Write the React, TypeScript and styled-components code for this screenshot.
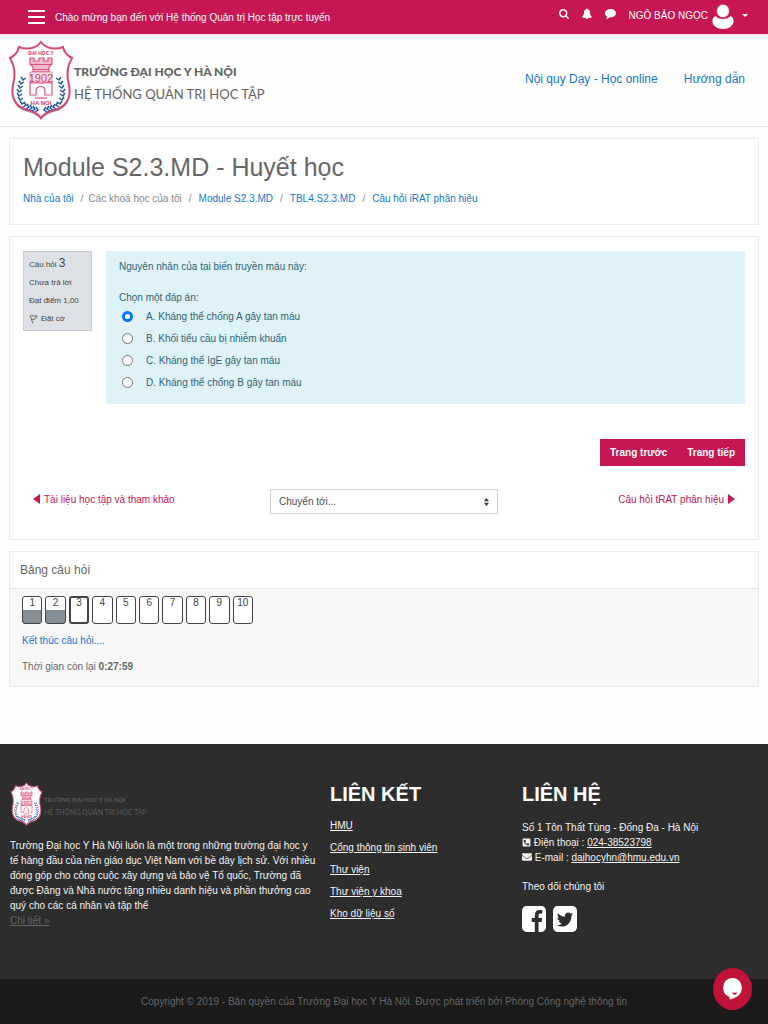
import React from "react";
import styled, { createGlobalStyle } from "styled-components";
import { FaEnvelope, FaPhoneSquareAlt } from "react-icons/fa";

const crimson = "#c61653";
const blue = "#1177d1";

const GlobalStyle = createGlobalStyle`
  *, *::before, *::after { box-sizing: border-box; }
  body {
    margin: 0;
    background: #fefefe;
    color: #666;
    font-family: "Liberation Sans", Arial, sans-serif;
    font-size: 10px;
    line-height: 15px;
  }
  a { color: ${blue}; text-decoration: none; }
  button, select, input { font: inherit; }
  h1, h2, h3, p, ul, ol, fieldset { margin: 0; padding: 0; border: 0; }
  ul, ol { list-style: none; }
`;

const Page = styled.div`
  display: flex;
  flex-direction: column;
  min-height: 100vh;
`;

const TopBar = styled.header`
  display: flex;
  align-items: center;
  height: 34px;
  padding: 0 20px 0 28px;
  background: ${crimson};
  color: #fff;
  box-shadow: 0 1px 4px rgba(0, 0, 0, 0.15);
`;

const IconButton = styled.button`
  display: inline-flex;
  padding: 0;
  border: 0;
  background: none;
  color: inherit;
`;

const Welcome = styled.span`
  flex: 1;
  margin-left: 10px;
`;

const TopActions = styled.div`
  display: flex;
  align-items: center;
  gap: 13px;
  padding-bottom: 6px;
`;

const UserMenu = styled.button`
  display: flex;
  align-items: center;
  gap: 4px;
  height: 26px;
  margin-bottom: -6px;
  padding: 0;
  border: 0;
  background: none;
  color: inherit;
`;

const UserName = styled.span`
  padding-bottom: 4px;
`;

const Caret = styled.span`
  margin: 0 0 4px 4px;
  border: 3px solid transparent;
  border-top-color: #fff;
  border-bottom: 0;
`;

const Masthead = styled.div`
  display: flex;
  align-items: center;
  justify-content: space-between;
  height: 93px;
  padding: 0 23px 0 8px;
  border-bottom: 1px solid #e4e4e4;
`;

const Brand = styled.a<{ $small?: boolean }>`
  display: flex;
  align-items: center;
  gap: ${(p) => (p.$small ? 1 : 0)}px;
  color: ${(p) => (p.$small ? "#595959" : "#636363")};
`;

const BrandText = styled.span<{ $small?: boolean }>`
  display: flex;
  flex-direction: column;
  font-family: Lato, "Noto Sans", sans-serif;
  font-size: ${(p) => (p.$small ? 7 : 13)}px;
  line-height: ${(p) => (p.$small ? 13 : 23)}px;
  white-space: nowrap;
  padding-top: ${(p) => (p.$small ? 3 : 6)}px;
`;

const BrandName = styled.b<{ $small?: boolean }>`
  font-size: ${(p) => (p.$small ? 6 : 12)}px;
  font-weight: 900;
`;

const MainNav = styled.nav`
  display: flex;
  gap: 26px;
  padding-bottom: 2px;
  font-size: 12px;
`;

const Main = styled.main`
  display: flex;
  flex: 1;
  flex-direction: column;
  gap: 11px;
  padding: 11px 9px 57px;
`;

const Card = styled.section`
  border: 1px solid #eaeaea;
  background: #fff;
`;

const TitleCard = styled(Card)`
  padding: 12px 13px 18px;
`;

const Title = styled.h1`
  font-size: 25px;
  font-weight: 400;
  line-height: 33px;
`;

const Crumbs = styled.ol`
  display: flex;
  flex-wrap: wrap;
  margin-top: 7px;
  li + li::before {
    content: "/";
    margin: 0 7px;
  }
  li + li[data-plain]::before {
    margin-right: 5px;
  }
`;

const Crumb = styled.li`
  color: #888;
`;

const QuestionCard = styled(Card)`
  padding: 14px 13px 25px;
`;

const QuestionRow = styled.div`
  display: flex;
  align-items: flex-start;
  gap: 14px;
`;

const Info = styled.div`
  flex: none;
  width: 69px;
  height: 80px;
  padding: 2px 5px;
  border: 1px solid #c8ccd1;
  background: #dde1e6;
  color: #444;
  font-size: 8px;
  line-height: 18px;
`;

const QuestionNo = styled.span`
  font-size: 12px;
`;

const FlagButton = styled(IconButton)`
  align-items: center;
  gap: 3px;
  line-height: 18px;
`;

const Formulation = styled.div`
  flex: 1;
  min-height: 153px;
  padding: 8px 13px;
  background: #def2f8;
  color: #2f6473;
`;

const Answers = styled.fieldset`
  display: flex;
  flex-direction: column;
  gap: 1px;
  margin-top: 16px;
`;

const Prompt = styled.legend`
  padding: 0 0 1px;
`;

const Answer = styled.label`
  display: flex;
  align-items: center;
  height: 21px;
  gap: 13px;
`;

const Radio = styled.input`
  width: 11px;
  height: 11px;
  margin: 0 0 0 3px;
  appearance: none;
  border: 1px solid #767676;
  border-radius: 50%;
  background: #fff;
  &:checked { border: 3px solid #0075ff; }
`;

const PageButtons = styled.div`
  display: flex;
  justify-content: flex-end;
  margin-top: 35px;
`;

const PageButton = styled.button`
  height: 27px;
  padding: 0 10px 1px;
  border: 0;
  background: ${crimson};
  color: #fff;
  font-weight: 700;
`;

const ActivityNav = styled.nav`
  display: grid;
  grid-template-columns: 1fr 228px 1fr;
  gap: 18px;
  margin-top: 23px;
  padding: 0 10px;
`;

const ActivityLink = styled.a<{ $end?: boolean }>`
  display: flex;
  align-items: center;
  gap: 4px;
  height: 20px;
  justify-content: ${(p) => (p.$end ? "flex-end" : "flex-start")};
  color: ${crimson};
`;

const Arrow = styled.span<{ $right?: boolean }>`
  border: 5px solid transparent;
  border-${(p) => (p.$right ? "left" : "right")}: 7px solid ${crimson};
  border-${(p) => (p.$right ? "right" : "left")}: 0;
`;

const SelectBox = styled.div`
  display: grid;
  align-items: center;
  & > * { grid-area: 1 / 1; }
  & > svg { justify-self: end; margin-right: 9px; pointer-events: none; }
`;

const JumpSelect = styled.select`
  width: 100%;
  height: 25px;
  padding: 0 8px;
  appearance: none;
  border: 1px solid #ccd1d7;
  border-radius: 0;
  background: #fff;
  color: #495057;
`;

const MapTitle = styled.h2`
  padding: 9px 10px;
  border-bottom: 1px solid #e6e6e6;
  background: #fff;
  font-size: 12px;
  font-weight: 400;
  line-height: 18px;
`;

const MapCard = styled(Card)`
  background: #f8f8f8;
`;

const MapBody = styled.div`
  padding: 7px 12px 12px;
`;

const QuestionList = styled.div`
  display: grid;
  grid-template-columns: repeat(10, 1fr);
  gap: 3px;
  width: 231px;
  margin-bottom: 9px;
`;

const QuestionLink = styled.a<{ $state: string }>`
  height: 28px;
  border: ${(p) => (p.$state === "current" ? 2 : 1)}px solid #444;
  border-radius: 3px;
  background: ${(p) =>
    p.$state === "saved" ? "linear-gradient(#fff 50%, #868e96 50%)" : "#fff"};
  color: #444;
  line-height: ${(p) => (p.$state === "current" ? 10 : 12)}px;
  text-align: center;
`;

const TimeLeft = styled.p`
  margin-top: 11px;
`;

const Footer = styled.footer`
  background: #2d2d2d;
  color: #f4f4f4;
`;

const FooterGrid = styled.div`
  display: grid;
  grid-template-columns: 5fr 3fr 4fr;
  min-height: 235px;
  padding: 38px 0 24px;
`;

const FooterColumn = styled.section`
  padding: 0 4px 0 10px;
  a { color: #f4f4f4; text-decoration: underline; text-underline-offset: 1px; }
`;

const About = styled.p`
  margin-top: 12px;
`;

const FooterTitle = styled.h3`
  color: #fff;
  font-size: 20px;
  line-height: 24px;
`;

const LinkList = styled.ul`
  display: flex;
  flex-direction: column;
  gap: 7px;
  margin-top: 12px;
`;

const Address = styled.address`
  margin-top: 14px;
  font-style: normal;
  svg { vertical-align: -1px; }
`;

const Follow = styled.p`
  margin: 14px 0 12px;
`;

const Social = styled.div`
  display: flex;
  gap: 7px;
`;

const DetailLink = styled.span`
  display: block;
  && a { color: #666; }
`;

const BrandSlot = styled.div`
  && a { color: #595959; text-decoration: none; }
`;

const Copyright = styled.div`
  padding: 15px 10px;
  background: #1a1a1a;
  color: #666;
  text-align: center;
`;

const ChatButton = styled.button`
  position: fixed;
  right: 16px;
  bottom: 14px;
  display: flex;
  align-items: center;
  justify-content: center;
  width: 39px;
  height: 42px;
  padding: 0;
  border: 0;
  border-radius: 50%;
  background: #c11237;
`;

const leaves = [
  [15, 37], [13, 41], [12, 45], [11, 49], [11, 53], [12, 57], [14, 61],
];
const lowerLeaves = [
  [17, 65], [20, 67], [23, 68], [26, 69], [29, 70],
];

function Crest({ width, height }: { width: number; height: number }) {
  return (
    <svg width={width} height={height} viewBox="0 0 66 80" preserveAspectRatio="none" aria-hidden="true">
      <path d="M33 4 C28 11 18 11 11 8 C10 13 6 17 2 20 C8 30 7 39 5 47 C2 62 10 70 20 72 C27 74 31 77 33 80 C35 77 39 74 46 72 C56 70 64 62 61 47 C59 39 58 30 64 20 C60 17 56 13 55 8 C48 11 38 11 33 4Z" fill="#a9a9a9" />
      <path d="M33 2 C28 9 18 10 11 7 C10 12 6 16 2 18 C8 28 7 38 5 45 C2 60 10 68 20 70 C27 72 31 75 33 78 C35 75 39 72 46 70 C56 68 64 60 61 45 C59 38 58 28 64 18 C60 16 56 12 55 7 C48 10 38 9 33 2Z" fill="#fff" stroke="#d94873" strokeWidth="2" />
      <g fill="#f4bccb" stroke="#dd5277" strokeWidth="1.2">
        <path d="M22 18h4v3h5v-3h5v3h4v-3h4v6l-3 3v5H25v-5l-3-3z" />
        <path d="M25 29.500h16M22 24.500h22" />
        <path d="M22 32h22v11H22z" fill="#fae0e7" strokeWidth=".6" />
        <path d="M22 43h22v12h-7v-4c0-6-9-6-9 0v4h-6z" fill="#fff" />
        <path d="M27 58h12" />
      </g>
      <g fontFamily="Liberation Sans, sans-serif" fontWeight="700" fill="#d53c68" textAnchor="middle">
        <text x="33" y="15" fontSize="5">ĐẠI HỌC Y</text>
        <text x="33" y="42" fontSize="11" fontWeight="400">1902</text>
        <text x="33" y="65" fontSize="6">HA NOI</text>
      </g>
      {[1, -1].map((side) => (
        <g key={side} transform={side === 1 ? undefined : "translate(66 0) scale(-1 1)"} stroke="#2857a5" strokeWidth="1.500" fill="none">
          {leaves.map(([x, y]) => (
            <path key={y} d={`M${x - 2} ${y}l2 3l3-2`} />
          ))}
          {lowerLeaves.map(([x, y]) => (
            <path key={y} d={`M${x - 1} ${y - 3}l2 3l-3 2`} />
          ))}
        </g>
      ))}
    </svg>
  );
}

function Logo({ small }: { small?: boolean }) {
  return (
    <Brand href="#" $small={small}>
      <Crest width={small ? 33 : 66} height={small ? 44 : 80} />
      <BrandText $small={small}>
        <BrandName $small={small}>TRƯỜNG ĐẠI HỌC Y HÀ NỘI</BrandName>
        <span>HỆ THỐNG QUẢN TRỊ HỌC TẬP</span>
      </BrandText>
    </Brand>
  );
}

const answers = [
  "A. Kháng thể chống A gây tan máu",
  "B. Khối tiểu cầu bị nhiễm khuẩn",
  "C. Kháng thể IgE gây tan máu",
  "D. Kháng thể chống B gây tan máu",
];

const links = ["HMU", "Cổng thông tin sinh viên", "Thư viện", "Thư viện y khoa", "Kho dữ liệu số"];

export default function App() {
  return (
    <Page>
      <GlobalStyle />
      <TopBar>
        <IconButton aria-label="Menu">
          <svg width="17" height="14" viewBox="0 0 17 14" fill="#fff" aria-hidden="true">
            <path d="M0 0h17v2H0zM0 6h17v2H0zM0 12h17v2H0z" />
          </svg>
        </IconButton>
        <Welcome>Chào mừng bạn đến với Hệ thống Quản trị Học tập trực tuyến</Welcome>
        <TopActions>
          <IconButton aria-label="Tìm kiếm">
            <svg width="10" height="10" viewBox="0 0 1664 1664" fill="#fff" aria-hidden="true">
              <path d="M1152 704q0-185-131.5-316.5T704 256 387.5 387.5 256 704t131.5 316.5T704 1152t316.5-131.5T1152 704zm512 832q0 52-38 90t-90 38q-54 0-90-38l-343-342q-179 124-399 124-143 0-273.5-55.5t-225-150-150-225T0 704t55.5-273.5 150-225 225-150T704 0t273.5 55.5 225 150 150 225T1408 704q0 220-124 399l343 343q37 37 37 90z" />
            </svg>
          </IconButton>
          <IconButton aria-label="Thông báo">
            <svg width="10" height="12" viewBox="0 0 11 12" fill="#fff" aria-hidden="true">
              <path d="M5.500 0c.5 0 .8.300.8.900 1.700.400 2.400 1.700 2.500 3.300.1 2.300.7 3.800 2.000 4.900 0 .5-.3.900-.8.900H1c-.5 0-.8-.4-.8-.9C1.500 8 2.100 6.500 2.200 4.200 2.300 2.600 3 1.300 4.700.9 4.700.3 5 0 5.500 0zM4 10h3c0 .8-.7 1.500-1.500 1.500S4 10.800 4 10z" />
            </svg>
          </IconButton>
          <IconButton aria-label="Tin nhắn">
            <svg width="11" height="10" viewBox="0 0 11 10" fill="#fff" aria-hidden="true">
              <path d="M5.500 0C8.500 0 11 1.900 11 4.200s-2.500 4.200-5.500 4.200l-1-.1C3.500 9.300 2.300 9.800 1 10c.6-.7 1-1.500 1.100-2.400C.8 6.800 0 5.600 0 4.200 0 1.900 2.500 0 5.500 0z" />
            </svg>
          </IconButton>
          <UserMenu>
            <UserName>NGÔ BẢO NGỌC</UserName>
            <svg width="22" height="26" viewBox="0 0 22 26" fill="#fff" aria-hidden="true">
              <path d="M3.500 12C1 13 .4 15 .4 17c0 4.500 4.500 8 10.600 8s10.600-3.500 10.600-8c0-2-.6-4-3.100-5-1.500 2-4.200 3-7.500 3s-6-1-7.500-3z" />
              <ellipse cx="11" cy="7" rx="6.400" ry="6.700" stroke={crimson} strokeWidth=".7" />
            </svg>
            <Caret />
          </UserMenu>
        </TopActions>
      </TopBar>
      <Masthead>
        <Logo />
        <MainNav>
          <a href="#">Nội quy Dạy - Học online</a>
          <a href="#">Hướng dẫn</a>
        </MainNav>
      </Masthead>

      <Main>
        <TitleCard>
          <Title>Module S2.3.MD - Huyết học</Title>
          <Crumbs>
            <Crumb><a href="#">Nhà của tôi</a></Crumb>
            <Crumb data-plain>Các khoá học của tôi</Crumb>
            <Crumb><a href="#">Module S2.3.MD</a></Crumb>
            <Crumb><a href="#">TBL4.S2.3.MD</a></Crumb>
            <Crumb><a href="#">Câu hỏi iRAT phân hiệu</a></Crumb>
          </Crumbs>
        </TitleCard>

        <QuestionCard>
          <QuestionRow>
            <Info>
              <div>Câu hỏi <QuestionNo>3</QuestionNo></div>
              <div>Chưa trả lời</div>
              <div>Đạt điểm 1,00</div>
              <FlagButton>
                <svg width="9" height="10" viewBox="0 0 9 10" fill="none" stroke="#666" strokeWidth="1" aria-hidden="true">
                  <path d="M1 1.500l3 8M1.500 2c2-1.500 3 1 6.500 0-.5 2-1.500 3.500-5 3.500" />
                </svg>
                Đặt cờ
              </FlagButton>
            </Info>
            <Formulation>
              <p>Nguyên nhân của tai biến truyền máu này:</p>
              <Answers>
                <Prompt>Chọn một đáp án:</Prompt>
                {answers.map((text, i) => (
                  <Answer key={text}>
                    <Radio type="radio" name="answer" defaultChecked={i === 0} />
                    {text}
                  </Answer>
                ))}
              </Answers>
            </Formulation>
          </QuestionRow>
          <PageButtons>
            <PageButton>Trang trước</PageButton>
            <PageButton>Trang tiếp</PageButton>
          </PageButtons>
          <ActivityNav>
            <ActivityLink href="#"><Arrow />Tài liệu học tập và tham khảo</ActivityLink>
            <SelectBox>
              <JumpSelect aria-label="Chuyển tới...">
                <option>Chuyển tới...</option>
              </JumpSelect>
              <svg width="5" height="8" viewBox="0 0 5 8" fill="#343a40" aria-hidden="true">
                <path d="M0 3.200L2.500 0 5 3.200zM0 4.800L2.500 8 5 4.800z" />
              </svg>
            </SelectBox>
            <ActivityLink href="#" $end>Câu hỏi tRAT phân hiệu<Arrow $right /></ActivityLink>
          </ActivityNav>
        </QuestionCard>

        <MapCard>
          <MapTitle>Bảng câu hỏi</MapTitle>
          <MapBody>
            <QuestionList>
              {[1, 2, 3, 4, 5, 6, 7, 8, 9, 10].map((n) => (
                <QuestionLink key={n} href="#" $state={n < 3 ? "saved" : n === 3 ? "current" : "blank"}>
                  {n}
                </QuestionLink>
              ))}
            </QuestionList>
            <a href="#">Kết thúc câu hỏi....</a>
            <TimeLeft>Thời gian còn lại <b>0:27:59</b></TimeLeft>
          </MapBody>
        </MapCard>
      </Main>

      <Footer>
        <FooterGrid>
          <FooterColumn>
            <BrandSlot><Logo small /></BrandSlot>
            <About>
              Trường Đại học Y Hà Nội luôn là một trong những trường đại học y tế hàng đầu của nền giáo dục Việt Nam
              với bề dày lịch sử. Với nhiều đóng góp cho công cuộc xây dựng và bảo vệ Tổ quốc, Trường đã được Đảng và
              Nhà nước tặng nhiều danh hiệu và phần thưởng cao quý cho các cá nhân và tập thể
            </About>
            <DetailLink><a href="#">Chi tiết »</a></DetailLink>
          </FooterColumn>
          <FooterColumn>
            <FooterTitle>LIÊN KẾT</FooterTitle>
            <LinkList>
              {links.map((text) => (
                <li key={text}><a href="#">{text}</a></li>
              ))}
            </LinkList>
          </FooterColumn>
          <FooterColumn>
            <FooterTitle>LIÊN HỆ</FooterTitle>
            <Address>
              Số 1 Tôn Thất Tùng - Đống Đa - Hà Nội<br />
              <FaPhoneSquareAlt size={9} /> Điện thoại : <a href="tel:02438523798">024-38523798</a><br />
              <FaEnvelope size={10} /> E-mail : <a href="mailto:daihocyhn@hmu.edu.vn">daihocyhn@hmu.edu.vn</a>
            </Address>
            <Follow>Theo dõi chúng tôi</Follow>
            <Social>
              <a href="#" aria-label="Facebook">
                <svg width="24" height="26" viewBox="0 128 1536 1536" preserveAspectRatio="none" fill="#fff" aria-hidden="true">
                  <path d="M1248 128q119 0 203.500 84.500t84.500 203.500v960q0 119-84.500 203.500t-203.500 84.500h-188v-595h199l30-232h-229v-148q0-56 23.500-84t91.500-28l122-1v-207q-63-9-178-9-136 0-217.500 80t-81.500 226v171h-200v232h200v595h-532q-119 0-203.500-84.500t-84.500-203.500v-960q0-119 84.500-203.500t203.500-84.500h960z" />
                </svg>
              </a>
              <a href="#" aria-label="Twitter">
                <svg width="24" height="26" viewBox="0 0 1536 1536" preserveAspectRatio="none" fill="#fff" aria-hidden="true">
                  <path d="M1280 482q-56 25-121 34 68-40 93-117-65 38-134 51-61-66-153-66-87 0-148.500 61.500t-61.500 148.500q0 29 5 48-129-7-242-65t-192-155q-29 50-29 106 0 114 91 175-47-1-100-26v2q0 75 50 133.500t123 72.500q-29 8-51 8-13 0-39-4 21 63 74.500 104t121.500 42q-116 90-261 90-26 0-50-3 148 94 322 94 112 0 210-35.500t168-95 120.500-137 75-162 24.500-168.500q0-18-1-27 63-45 105-109zm256-194v960q0 119-84.500 203.500t-203.500 84.500h-960q-119 0-203.500-84.500t-84.500-203.500v-960q0-119 84.500-203.500t203.500-84.500h960q119 0 203.500 84.500t84.500 203.500z" />
                </svg>
              </a>
            </Social>
          </FooterColumn>
        </FooterGrid>
        <Copyright>
          Copyright © 2019 - Bản quyền của Trường Đại học Y Hà Nội. Được phát triển bởi Phòng Công nghệ thông tin
        </Copyright>
      </Footer>
      <ChatButton aria-label="Trò chuyện">
        <svg width="19" height="22" viewBox="0 0 19 22" aria-hidden="true">
          <path d="M9.500 0C15 0 18.800 4.300 18.800 10c0 5.500-4 10-12.300 11.500V19C2.500 17.500.2 14.500.2 10 .2 4.300 4 0 9.500 0z" fill="#fff" />
          <path d="M9 14.200q2.600 1.200 5.200 0-.6 2.600-2.600 2.600T9 14.200z" fill="#c11237" />
        </svg>
      </ChatButton>
    </Page>
  );
}
